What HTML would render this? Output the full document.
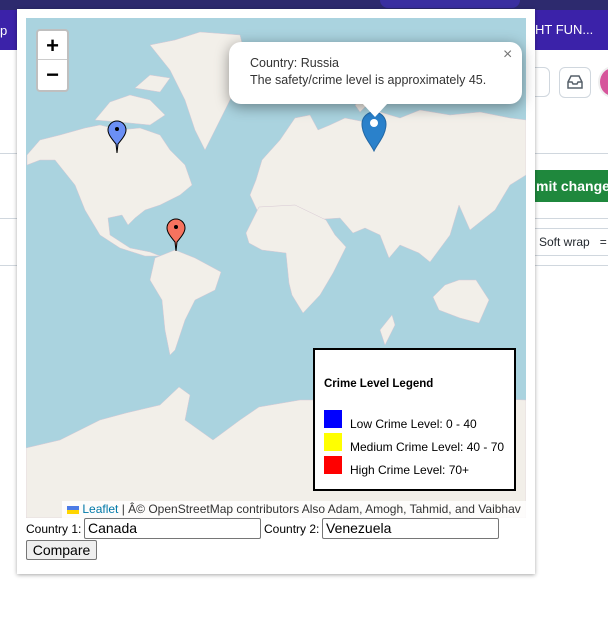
<!DOCTYPE html>
<html><head><style>
*{margin:0;padding:0;box-sizing:border-box}
body{width:608px;height:625px;background:#fff;position:relative;overflow:hidden;font-family:"Liberation Sans",Arial,sans-serif}
.a{position:absolute}
</style></head><body>
<div class="a" style="left:0;top:0;width:608px;height:10px;background:#2d2a6e"></div>
<div class="a" style="left:380px;top:0;width:140px;height:8px;background:#3a2fa0;border-radius:0 0 10px 10px"></div>
<div class="a" style="left:0;top:10px;width:608px;height:40px;background:#3b22a9"></div>
<div class="a" style="left:0;top:23px;color:#fff;font-size:13px">p</div>
<div class="a" style="left:535px;top:22px;color:#fff;font-size:13px">HT FUN...</div>
<div class="a" style="left:520px;top:67px;width:30px;height:30px;border:1px solid #d0d7de;border-radius:6px"></div>
<div class="a" style="left:559px;top:67px;width:32px;height:31px;border:1px solid #d0d7de;border-radius:6px"></div>
<svg class="a" style="left:566px;top:74px" width="18" height="16"><path d="M2 8 L5 2 H13 L16 8 V14 H2 Z M2 8 H6 L7 10 H11 L12 8 H16" fill="none" stroke="#57606a" stroke-width="1.5"/></svg>
<div class="a" style="left:598px;top:66px;width:30px;height:32px;border-radius:50%;background:#d6559b;border:2px solid #eee"></div>
<div class="a" style="left:0;top:153px;width:608px;height:1px;background:#d0d7de"></div>
<div class="a" style="left:530px;top:170px;width:90px;height:32px;background:#1f883d;color:#fff;font-weight:bold;font-size:14px;line-height:32px;padding-left:6px">mit changes</div>
<div class="a" style="left:0;top:218px;width:608px;height:1px;background:#d0d7de"></div>
<div class="a" style="left:530px;top:228px;width:90px;height:28px;border:1px solid #d0d7de;font-size:12px;line-height:27px;padding-left:8px;color:#24292f">Soft wrap &nbsp;&nbsp;=</div>
<div class="a" style="left:0;top:265px;width:608px;height:1px;background:#d0d7de"></div>

<div class="a" style="left:17px;top:9px;width:518px;height:565px;background:#fff;box-shadow:0 1px 4px rgba(0,0,0,.35)"></div>
<svg class="a" style="left:26px;top:18px" width="500" height="500" viewBox="26 18 500 500">
<rect x="26" y="18" width="500" height="500" fill="#aad3df"/>
<g fill="#f2efe9" stroke="#d8c8d4" stroke-width="0.5">
<path d="M27 155 L40 140 L60 135 L85 128 L100 125 L120 130 L140 128 L160 135 L170 150 L185 165 L192 185 L180 195 L160 205 L145 210 L135 218 L128 225 L122 215 L108 218 L110 235 L130 248 L150 252 L160 256 L145 256 L120 248 L100 235 L85 210 L75 185 L55 160 L40 160 L27 165Z"/>
<path d="M95 120 L110 102 L130 95 L150 100 L165 115 L150 125 L120 122Z"/>
<path d="M135 88 L150 75 L170 78 L160 92Z"/>
<path d="M150 45 L175 40 L200 32 L240 35 L245 55 L235 90 L220 120 L205 150 L195 130 L185 100 L170 70Z"/>
<path d="M256 180 L262 160 L280 140 L295 118 L310 115 L318 130 L330 125 L345 118 L365 122 L380 112 L400 118 L420 110 L450 115 L480 112 L510 118 L526 120 L526 175 L510 185 L495 210 L470 230 L459 205 L450 235 L430 262 L419 253 L400 245 L389 258 L380 235 L365 228 L353 233 L340 218 L310 220 L290 212 L270 218 L258 212 L250 195Z"/>
<path d="M355 105 L368 95 L372 100 L360 112Z"/>
<path d="M246 233 L259 207 L295 205 L326 220 L335 235 L346 247 L333 273 L320 295 L303 313 L292 295 L289 283 L286 253 L262 250 L249 243Z"/>
<path d="M155 258 L175 250 L195 258 L221 272 L215 290 L195 300 L185 320 L175 350 L170 355 L165 330 L162 300 L150 280Z"/>
<path d="M433 297 L445 285 L459 280 L476 280 L489 300 L479 323 L460 318 L439 310Z"/>
<path d="M380 330 L392 315 L395 325 L385 345Z"/>
<path d="M26 448 L60 440 L100 420 L126 413 L160 405 L179 387 L190 395 L185 420 L213 440 L240 420 L259 407 L300 400 L326 400 L400 402 L460 398 L526 400 L526 518 L26 518Z"/>
</g>
</svg>
<!-- zoom -->
<div class="a" style="left:36px;top:29px;width:33px;height:63px;border:2px solid rgba(0,0,0,.25);border-radius:4px;background:#fff"></div>
<div class="a" style="left:38px;top:31px;width:29px;height:29px;border-bottom:1px solid #ccc;text-align:center;font:bold 22px/29px 'Liberation Sans';color:#000">+</div>
<div class="a" style="left:38px;top:61px;width:29px;height:29px;text-align:center;font:bold 22px/27px 'Liberation Sans';color:#000">−</div>
<!-- markers -->
<svg class="a" style="left:107px;top:120px" width="20" height="34"><path d="M10 33 L9 24 C4 18 1 14 1 10 A9 9 0 0 1 19 10 C19 14 16 18 11 24 Z" fill="#6b8ff5" stroke="#000" stroke-width="1"/><circle cx="10" cy="9" r="2" fill="#000"/></svg>
<svg class="a" style="left:166px;top:218px" width="20" height="34"><path d="M10 33 L9 24 C4 18 1 14 1 10 A9 9 0 0 1 19 10 C19 14 16 18 11 24 Z" fill="#f6735f" stroke="#000" stroke-width="1"/><circle cx="10" cy="9" r="2" fill="#000"/></svg>
<svg class="a" style="left:360px;top:110px" width="40" height="45"><path d="M14 41 C10 33 2 25 2 14 A12 12 0 0 1 26 14 C26 25 18 33 14 41Z" fill="#2a81cb" stroke="#2468a4" stroke-width="1"/><circle cx="14" cy="13" r="4" fill="#fff"/></svg>
<!-- popup -->
<div class="a" style="left:229px;top:42px;width:293px;height:62px;background:#fff;border-radius:12px;box-shadow:0 3px 14px rgba(0,0,0,.4)"></div>
<svg class="a" style="left:362px;top:103px" width="26" height="16"><path d="M0 0 L26 0 L13 14Z" fill="#fff"/></svg>
<div class="a" style="left:250px;top:55px;font-size:12.5px;line-height:17px;color:#333">Country: Russia<br>The safety/crime level is approximately 45.</div>
<div class="a" style="left:503px;top:46px;font-size:16px;color:#757575">×</div>
<!-- legend -->
<div class="a" style="left:313px;top:348px;width:203px;height:143px;background:#fff;border:2px solid #000"></div>
<div class="a" style="left:324px;top:378px;font-size:11.5px;font-weight:bold;color:#000">Crime Level Legend</div>
<div class="a" style="left:324px;top:410px;width:18px;height:18px;background:#00f"></div>
<div class="a" style="left:324px;top:433px;width:18px;height:18px;background:#ff0"></div>
<div class="a" style="left:324px;top:456px;width:18px;height:18px;background:#f00"></div>
<div class="a" style="left:350px;top:413px;font-size:12px;line-height:23px;color:#000">Low Crime Level: 0 - 40<br>Medium Crime Level: 40 - 70<br>High Crime Level: 70+</div>
<!-- attribution -->
<div class="a" style="left:62px;top:501px;width:464px;height:17px;background:rgba(255,255,255,.8);font-size:12px;line-height:17px;color:#333;padding-left:5px;white-space:nowrap"><span style="display:inline-block;width:12px;height:8px;background:linear-gradient(#4c7be5 50%,#ffd500 50%);vertical-align:-1px"></span> <span style="color:#0078a8">Leaflet</span> | Â© OpenStreetMap contributors Also Adam, Amogh, Tahmid, and Vaibhav</div>
<!-- form -->
<div class="a" style="left:26px;top:522px;font-size:12px;color:#000">Country 1:</div>
<div class="a" style="left:84px;top:518px;width:177px;height:21px;border:1px solid #767676;border-radius:2px;font-size:14px;line-height:19px;padding-left:3px">Canada</div>
<div class="a" style="left:264px;top:522px;font-size:12px;color:#000">Country 2:</div>
<div class="a" style="left:322px;top:518px;width:177px;height:21px;border:1px solid #767676;border-radius:2px;font-size:14px;line-height:19px;padding-left:3px">Venezuela</div>
<div class="a" style="left:26px;top:540px;width:71px;height:20px;border:1px solid #767676;border-radius:2px;background:#efefef;font-size:14px;line-height:18px;text-align:center">Compare</div>
</body></html>
